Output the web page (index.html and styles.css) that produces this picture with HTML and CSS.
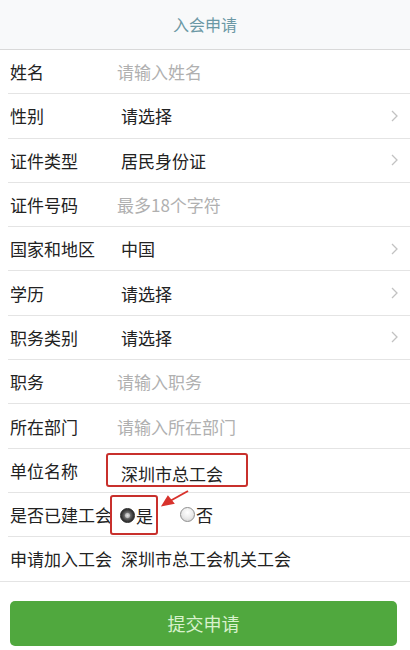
FILE: index.html
```html
<!DOCTYPE html>
<html lang="zh-CN">
<head>
    <meta charset="UTF-8">
    <meta name="viewport" content="width=device-width, initial-scale=1.0">
    <title>入会申请</title>
    <link rel="stylesheet" href="styles.css">
</head>
<body>
    <div class="page">
        <header class="title-bar">入会申请</header>

        <form class="apply-form">
            <div class="field">
                <span class="field-label">姓名</span>
                <input class="field-input" type="text" placeholder="请输入姓名">
            </div>
            <div class="field">
                <span class="field-label">性别</span>
                <span class="field-select">请选择</span>
                <svg class="chevron" viewBox="0 0 7 12"><polyline points="1,1 6,6 1,11"/></svg>
            </div>
            <div class="field">
                <span class="field-label">证件类型</span>
                <span class="field-select">居民身份证</span>
                <svg class="chevron" viewBox="0 0 7 12"><polyline points="1,1 6,6 1,11"/></svg>
            </div>
            <div class="field">
                <span class="field-label">证件号码</span>
                <input class="field-input" type="text" placeholder="最多18个字符">
            </div>
            <div class="field">
                <span class="field-label">国家和地区</span>
                <span class="field-select">中国</span>
                <svg class="chevron" viewBox="0 0 7 12"><polyline points="1,1 6,6 1,11"/></svg>
            </div>
            <div class="field">
                <span class="field-label">学历</span>
                <span class="field-select">请选择</span>
                <svg class="chevron" viewBox="0 0 7 12"><polyline points="1,1 6,6 1,11"/></svg>
            </div>
            <div class="field">
                <span class="field-label">职务类别</span>
                <span class="field-select">请选择</span>
                <svg class="chevron" viewBox="0 0 7 12"><polyline points="1,1 6,6 1,11"/></svg>
            </div>
            <div class="field">
                <span class="field-label">职务</span>
                <input class="field-input" type="text" placeholder="请输入职务">
            </div>
            <div class="field">
                <span class="field-label">所在部门</span>
                <input class="field-input" type="text" placeholder="请输入所在部门">
            </div>
            <div class="field">
                <span class="field-label">单位名称</span>
                <span class="field-text marked-text">深圳市总工会</span>
            </div>
            <div class="field">
                <span class="field-label">是否已建工会</span>
                <label class="radio marked-radio">
                    <span class="radio-dot checked"></span>是
                </label>
                <label class="radio">
                    <span class="radio-dot"></span>否
                </label>
                <!-- 提示箭头 -->
                <svg class="hint-arrow" viewBox="0 0 30 20">
                    <line x1="28" y1="2" x2="10" y2="12"/>
                    <polygon points="3,16 8,8 13,14"/>
                </svg>
            </div>
            <div class="field last">
                <span class="field-label">申请加入工会</span>
                <span class="field-text">深圳市总工会机关工会</span>
            </div>

            <button type="button" class="submit-btn">提交申请</button>
        </form>
    </div>
</body>
</html>
```

FILE: styles.css
```css
:root {
    --text-color: #222;
    --muted-color: #b0b0b0;
    --line-color: #e4e4e4;
    --mark-color: #c8302c;
    --green: #50a83e;
}

body {
    margin: 0;
    font-family: "Noto Sans CJK SC", "Liberation Sans", sans-serif;
    color: var(--text-color);
    background-color: #fff;
}

.page {
    width: 410px;
}

.title-bar {
    height: 49px;
    line-height: 49px;
    text-align: center;
    font-size: 16px;
    color: #6b98a5;
    background-color: #f8f9fa;
    border-bottom: 1px solid #d9d9d9;
}

.apply-form {
    position: relative;
    margin: 0;
}

.field {
    position: relative;
    display: flex;
    align-items: center;
    height: 43.3px;
    margin-left: 8px;
    padding-left: 2px;
    border-bottom: 1px solid var(--line-color);
    font-size: 17px;
}

.field.last {
    margin-left: 0;
    padding-left: 10px;
}

.field-label {
    width: 107px;
    flex-shrink: 0;
    white-space: nowrap;
}

.field-input {
    flex: 1;
    border: none;
    outline: none;
    padding: 0;
    font-family: inherit;
    font-size: 17px;
    color: var(--text-color);
    background: transparent;
}

.field-input::placeholder {
    color: var(--muted-color);
}

.field-select {
    flex: 1;
    padding-left: 4px;
}

.field-text {
    padding-left: 4px;
}

.chevron {
    width: 7px;
    height: 12px;
    margin-right: 12px;
    fill: none;
    stroke: #c2c2c2;
    stroke-width: 1.3;
}

/* 红框标注 */
.marked-text {
    margin-left: -11px;
    line-height: 22px;
    padding: 8px 23px 0 13px;
    border: 2px solid var(--mark-color);
    border-radius: 3px;
}

.radio {
    display: flex;
    align-items: center;
    height: 100%;
}

.marked-radio {
    margin-left: -7px;
    height: 36px;
    padding: 0 3px 0 8px;
    border: 2px solid var(--mark-color);
    border-radius: 3px;
    margin-top: 1px;
    margin-right: 22px;
}

.radio-dot {
    width: 15px;
    height: 15px;
    border-radius: 50%;
    margin-right: 1px;
    box-sizing: border-box;
    border: 1px solid #8e8e8e;
    background: radial-gradient(circle at 50% 35%, #fff 0%, #e9e9e9 55%, #c9c9c9 100%);
}

.radio-dot.checked {
    border: 1px solid #222;
    background: radial-gradient(circle, #e2e2e2 0%, #bdbdbd 22%, #6a6a6a 34%, #3a3a3a 60%, #2b2b2b 100%);
}

.hint-arrow {
    position: absolute;
    left: 149px;
    top: -4px;
    width: 36px;
    height: 20px;
    stroke: #d8322c;
    stroke-width: 2;
    fill: #d8322c;
}

.submit-btn {
    display: block;
    width: 387px;
    height: 45px;
    margin: 19px 0 0 10px;
    border: none;
    border-radius: 5px;
    background-color: var(--green);
    color: #d9f2cd;
    font-family: inherit;
    font-size: 18px;
    cursor: pointer;
}
```
